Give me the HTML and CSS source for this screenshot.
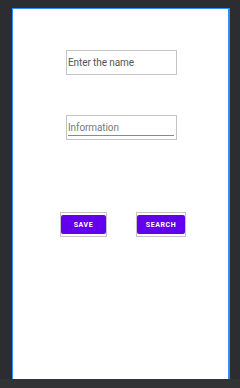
FILE: index.html
```html
<!DOCTYPE html>
<html>
<head>
<meta charset="utf-8">
<link rel="stylesheet" href="styles.css">
</head>
<body>
<div class="frame">
  <div class="field field-name">
    <span class="placeholder">Enter the name</span>
  </div>
  <div class="field field-info">
    <span class="placeholder info">Information</span>
    <div class="underline"></div>
  </div>
  <div class="buttons">
    <div class="btn-wrap save"><button class="btn">SAVE</button></div>
    <div class="btn-wrap search"><button class="btn">SEARCH</button></div>
  </div>
</div>
<div class="bottom"></div>
</body>
</html>
```
FILE: styles.css
```css
html, body {
  margin: 0;
  padding: 0;
  background: #2b2d30;
  width: 240px;
  height: 388px;
  overflow: hidden;
  font-family: Roboto, "Liberation Sans", sans-serif;
}
.frame {
  box-sizing: border-box;
  margin: 8px 0 0 12px;
  width: 218px;
  height: 371px;
  background: #ffffff;
  border-left: 1px solid #2f8cff;
  border-top: 1px solid #2f8cff;
  border-right: 2px solid #2f8cff;
  padding-top: 41px;
}
.field {
  box-sizing: border-box;
  margin-left: 53px;
  width: 111px;
  height: 25px;
  border: 1px solid #c4c4c4;
  position: relative;
}
.field-info {
  margin-top: 40px;
}
.placeholder {
  display: block;
  font-size: 10px;
  line-height: 10px;
  color: #555555;
  padding: 7px 0 0 1px;
  letter-spacing: -0.1px;
}
.placeholder.info {
  color: #7a7a7a;
}
.underline {
  position: absolute;
  left: 1px;
  right: 2px;
  top: 19px;
  height: 1px;
  background: #8a8a8a;
}
.buttons {
  display: flex;
  margin-top: 72px;
  margin-left: 47px;
  gap: 29px;
}
.btn-wrap {
  box-sizing: border-box;
  height: 25px;
  border: 1px solid #c4c4c4;
  padding: 2px 0 1px 0;
}
.save { width: 47px; }
.search { width: 50px; }
.btn {
  display: block;
  width: 100%;
  height: 19px;
  border: none;
  margin: 0;
  padding: 0;
  background: #6200ee;
  color: #ffffff;
  border-radius: 2px;
  font-family: Roboto, "Liberation Sans", sans-serif;
  font-weight: bold;
  font-size: 7px;
  letter-spacing: 0.6px;
}
.bottom {
  height: 9px;
  background: #313335;
}
```
